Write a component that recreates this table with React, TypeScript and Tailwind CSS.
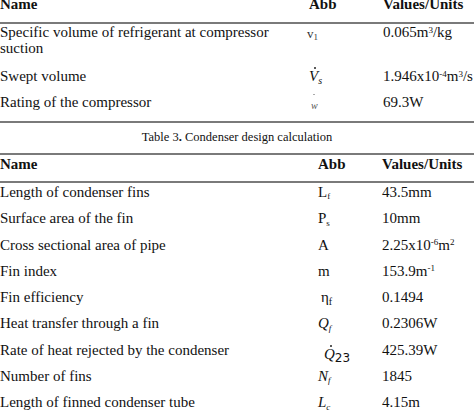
import React from "react";

const Rule = () => <div className="h-[2px] w-full bg-[#7a7a7a]" />;

type Row = { name: React.ReactNode; abb: React.ReactNode; val: React.ReactNode };

const Sup = ({ children }: { children: React.ReactNode }) => (
  <sup className="text-[9px]">{children}</sup>
);
const Sub = ({ children }: { children: React.ReactNode }) => (
  <sub className="text-[9px]">{children}</sub>
);
const Dot = ({ cls }: { cls: string }) => (
  <span className={"absolute w-[2px] h-[2px] rounded-full bg-[#222] " + cls} />
);

const top: Row[] = [
  {
    name: (
      <>
        Specific volume of refrigerant at compressor
        <br />
        suction
      </>
    ),
    abb: (
      <span className="text-[13px] text-[#333]">
        v<Sub>1</Sub>
      </span>
    ),
    val: (
      <>
        0.065m<Sup>3</Sup>/kg
      </>
    ),
  },
  {
    name: "Swept volume",
    abb: (
      <span className="relative inline-block italic text-[15px] pl-[2px]">
        <Dot cls="left-[7px] top-[-1px]" />
        V<sub className="text-[10px]">s</sub>
      </span>
    ),
    val: (
      <>
        1.946x10<Sup>-4</Sup>m<Sup>3</Sup>/s
      </>
    ),
  },
  {
    name: "Rating of the compressor",
    abb: (
      <span className="relative inline-block italic text-[10px] text-[#555] pl-[4px] pt-[4px]">
        <span className="absolute left-[6px] top-[0px] w-[2px] h-[1px] bg-[#aaa]" />
        w
      </span>
    ),
    val: "69.3W",
  },
];

const bottom: Row[] = [
  { name: "Length of condenser fins", abb: (<>L<Sub>f</Sub></>), val: "43.5mm" },
  { name: "Surface area of the fin", abb: (<>P<Sub>s</Sub></>), val: "10mm" },
  {
    name: "Cross sectional area of pipe",
    abb: "A",
    val: (
      <>
        2.25x10<Sup>-6</Sup>m<Sup>2</Sup>
      </>
    ),
  },
  {
    name: "Fin index",
    abb: "m",
    val: (
      <>
        153.9m<Sup>-1</Sup>
      </>
    ),
  },
  {
    name: "Fin efficiency",
    abb: (
      <span className="pl-[3px]">
        η<sub className="text-[10px]">f</sub>
      </span>
    ),
    val: "0.1494",
  },
  {
    name: "Heat transfer through a fin",
    abb: (
      <span className="italic">
        Q<Sub>f</Sub>
      </span>
    ),
    val: "0.2306W",
  },
  {
    name: "Rate of heat rejected by the condenser",
    abb: (
      <span className="relative inline-block pl-[6px] pt-[4px]">
        <Dot cls="left-[12px] top-[3px]" />
        <span className="italic">Q</span>
        <sub className="text-[12px] font-['DejaVu_Sans',sans-serif]">23</sub>
      </span>
    ),
    val: "425.39W",
  },
  {
    name: "Number of fins",
    abb: (
      <span className="italic">
        N<Sub>f</Sub>
      </span>
    ),
    val: "1845",
  },
  {
    name: "Length of finned condenser tube",
    abb: (
      <span className="italic">
        L<Sub>c</Sub>
      </span>
    ),
    val: "4.15m",
  },
];

export default function App() {
  return (
    <div className="w-[474px] h-[413px] overflow-hidden bg-white text-[#111] font-['Liberation_Serif',serif] text-[15px] leading-[16px]">
      <div className="-mt-[4px]">
        <div className="grid grid-cols-[307px_76px_1fr] h-[26px] font-bold">
          <div>Name</div>
          <div className="pl-[2px]">Abb</div>
          <div>Values/Units</div>
        </div>
        <Rule />
        <div className="grid grid-cols-[307px_76px_1fr] h-[40px]">
          <div>{top[0].name}</div>
          <div className="pt-[1px]">{top[0].abb}</div>
          <div>{top[0].val}</div>
        </div>
        <div className="grid grid-cols-[307px_76px_1fr] h-[26px] pt-[4px]">
          <div>{top[1].name}</div>
          <div>{top[1].abb}</div>
          <div>{top[1].val}</div>
        </div>
        <div className="grid grid-cols-[307px_76px_1fr] h-[31px] pt-[4px]">
          <div>{top[2].name}</div>
          <div>{top[2].abb}</div>
          <div>{top[2].val}</div>
        </div>
        <Rule />
        <div className="h-[30px] pt-[7px] text-center text-[12.5px] leading-[14px]">
          Table 3<span className="font-bold">.</span> Condenser design calculation
        </div>
        <Rule />
        <div className="grid grid-cols-[318px_64px_1fr] h-[26px] pt-[1px] font-bold">
          <div>Name</div>
          <div>Abb</div>
          <div>Values/Units</div>
        </div>
        <Rule />
        <div className="flex flex-col">
          {bottom.map((r, i) => (
            <div key={i} className="grid grid-cols-[318px_64px_1fr] h-[26.3px] pt-[1px]">
              <div>{r.name}</div>
              <div>{r.abb}</div>
              <div>{r.val}</div>
            </div>
          ))}
        </div>
      </div>
    </div>
  );
}
